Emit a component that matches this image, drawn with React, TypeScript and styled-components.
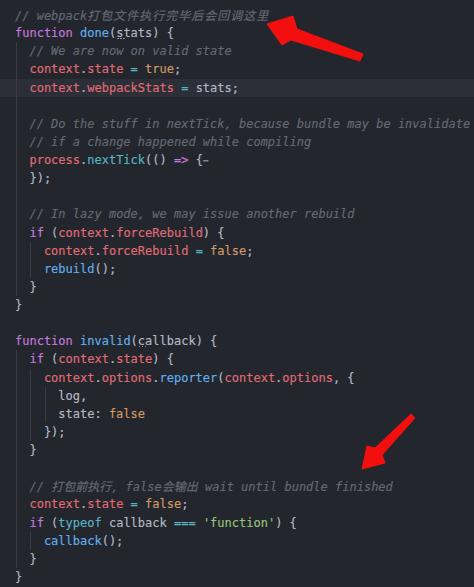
import React from "react";
import styled, { createGlobalStyle } from "styled-components";

const Global = createGlobalStyle`
  html, body { margin: 0; padding: 0; background: #23262d; }
  #root { width: 474px; height: 587px; }
`;

const C = {
  kw: "#c678dd",
  fn: "#61afef",
  vr: "#e06c75",
  op: "#56b6c2",
  num: "#d19a66",
  str: "#98c379",
  tx: "#b3b9c4",
  cm: "#646a75",
};

const Editor = styled.div`
  position: relative;
  width: 474px;
  height: 587px;
  overflow: hidden;
  background: #23262d;
  padding-top: 6px;
  box-sizing: border-box;
  font-family: "DejaVu Sans Mono", "Noto Sans CJK SC", monospace;
  font-size: 12px;
  -webkit-text-stroke: 0.15px;
`;

const Line = styled.div<{ $active?: boolean }>`
  display: flex;
  height: 18.13px;
  line-height: 18.13px;
  padding-left: 15px;
  background: ${(p) => (p.$active ? "#2c2f37" : "transparent")};
  white-space: pre;
`;

const Guide = styled.span`
  flex: none;
  width: 2ch;
  box-sizing: border-box;
  border-left: 1px solid #383c44;
  margin-left: 1px;
  margin-right: -1px;
`;

const Code = styled.span`
  white-space: pre;
  color: ${C.tx};
`;

const T = styled.span<{ $c: string; $i?: boolean }>`
  color: ${(p) => p.$c};
  font-style: ${(p) => (p.$i ? "oblique" : "normal")};
`;

const Cjk = styled.span<{ $sp?: number }>`
  font-family: "Noto Sans CJK SC", sans-serif;
  letter-spacing: ${(p) => p.$sp ?? 0}px;
`;

const Hint = styled.span`
  position: relative;
  &::after {
    content: "";
    position: absolute;
    left: 1px;
    bottom: 1px;
    width: 1.5px;
    height: 1.5px;
    border-radius: 50%;
    background: #a0a6b0;
    box-shadow: 3px 0 0 #a0a6b0, 6px 0 0 #a0a6b0;
  }
`;

const Fold = styled.span`
  color: #9aa0aa;
  font-size: 10px;
`;

const Overlay = styled.svg`
  position: absolute;
  left: 0;
  top: 0;
  pointer-events: none;
`;

type Tok = React.ReactNode;
const k = (s: string) => <T $c={C.kw}>{s}</T>;
const f = (s: string) => <T $c={C.fn}>{s}</T>;
const v = (s: string) => <T $c={C.vr}>{s}</T>;
const o = (s: string) => <T $c={C.op}>{s}</T>;
const n = (s: string) => <T $c={C.num}>{s}</T>;
const s_ = (s: string) => <T $c={C.str}>{s}</T>;
const p = (s: string) => <T $c={C.tx}>{s}</T>;
const cm = (...c: Tok[]) => (
  <T $c={C.cm} $i>
    {c}
  </T>
);

const lines: { d: number; active?: boolean; t: Tok[] }[] = [
  { d: 0, t: [cm("// webpack", <Cjk $sp={1}>打包文件执行完毕后会回调这里</Cjk>)] },
  { d: 0, t: [k("function"), p(" "), f("done"), p("("), <Hint>{p("stats")}</Hint>, p(") {")] },
  { d: 1, t: [cm("// We are now on valid state")] },
  { d: 1, t: [v("context"), p("."), v("state"), p(" "), o("="), p(" "), n("true"), p(";")] },
  { d: 1, active: true, t: [v("context"), p("."), v("webpackStats"), p(" "), o("="), p(" stats;")] },
  { d: 1, t: [] },
  { d: 1, t: [cm("// Do the stuff in nextTick, because bundle may be invalidate")] },
  { d: 1, t: [cm("// if a change happened while compiling")] },
  { d: 1, t: [v("process"), p("."), o("nextTick"), p("(() "), k("=>"), p(" {"), <Fold>⋯</Fold>] },
  { d: 1, t: [p("});")] },
  { d: 1, t: [] },
  { d: 1, t: [cm("// In lazy mode, we may issue another rebuild")] },
  { d: 1, t: [k("if"), p(" ("), v("context"), p("."), v("forceRebuild"), p(") {")] },
  { d: 2, t: [v("context"), p("."), v("forceRebuild"), p(" "), o("="), p(" "), n("false"), p(";")] },
  { d: 2, t: [f("rebuild"), p("();")] },
  { d: 1, t: [p("}")] },
  { d: 0, t: [p("}")] },
  { d: 0, t: [] },
  { d: 0, t: [k("function"), p(" "), f("invalid"), p("("), <Hint>{p("callback")}</Hint>, p(") {")] },
  { d: 1, t: [k("if"), p(" ("), v("context"), p("."), v("state"), p(") {")] },
  {
    d: 2,
    t: [v("context"), p("."), v("options"), p("."), f("reporter"), p("("), v("context"), p("."), v("options"), p(", {")],
  },
  { d: 3, t: [p("log,")] },
  { d: 3, t: [p("state: "), n("false")] },
  { d: 2, t: [p("});")] },
  { d: 1, t: [p("}")] },
  { d: 1, t: [] },
  { d: 1, t: [cm("// ", <Cjk>打包前执行</Cjk>, ", false", <Cjk>会输出</Cjk>, " wait until bundle finished")] },
  { d: 1, t: [v("context"), p("."), v("state"), p(" "), o("="), p(" "), n("false"), p(";")] },
  {
    d: 1,
    t: [k("if"), p(" ("), o("typeof"), p(" callback "), o("==="), p(" "), s_("'function'"), p(") {")],
  },
  { d: 2, t: [f("callback"), p("();")] },
  { d: 1, t: [p("}")] },
  { d: 0, t: [p("}")] },
];

export default function App() {
  return (
    <>
      <Global />
      <Editor>
        {lines.map((l, i) => (
          <Line key={i} $active={l.active}>
            {Array.from({ length: l.d }).map((_, j) => (
              <Guide key={j} />
            ))}
            <Code>
              {l.t.map((tok, j) => (
                <React.Fragment key={j}>{tok}</React.Fragment>
              ))}
            </Code>
          </Line>
        ))}
        <Overlay width={474} height={587} viewBox="0 0 474 587">
          <polygon
            fill="#f40f0f"
            points="267,24 293,16 297,29 363,54 360,61 291,40 282,45"
            strokeLinejoin="round"
            stroke="#f40f0f"
            strokeWidth={1}
          />
          <polygon
            fill="#f40f0f"
            points="362,469 385,463 382,455 415,418 411,414 375,448 367,446"
            strokeLinejoin="round"
            stroke="#f40f0f"
            strokeWidth={1}
          />
        </Overlay>
      </Editor>
    </>
  );
}
